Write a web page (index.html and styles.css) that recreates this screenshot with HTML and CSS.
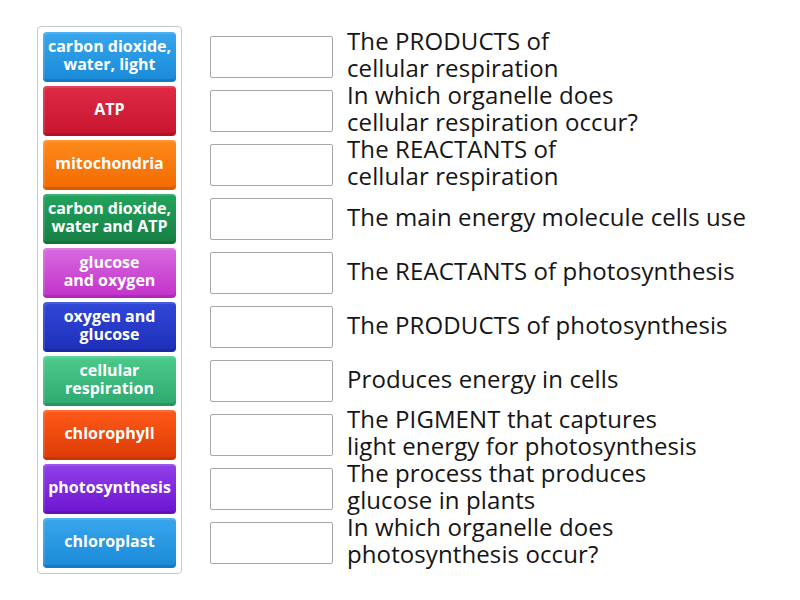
FILE: index.html
```html
<!DOCTYPE html>
<html lang="en">
<head>
  <meta charset="UTF-8" />
  <title>Match up</title>
  <link rel="stylesheet" href="styles.css">
</head>
<body>
  <div class="game">
    <div class="tiles">
      <div class="tile t-blue">carbon dioxide, water, light</div>
      <div class="tile t-red">ATP</div>
      <div class="tile t-orange">mitochondria</div>
      <div class="tile t-green">carbon dioxide, water and ATP</div>
      <div class="tile t-pink">glucose<br>and oxygen</div>
      <div class="tile t-navy">oxygen and glucose</div>
      <div class="tile t-mint">cellular respiration</div>
      <div class="tile t-flame">chlorophyll</div>
      <div class="tile t-purple">photosynthesis</div>
      <div class="tile t-blue">chloroplast</div>
    </div>

    <div class="rows">
      <div class="row"><div class="slot"></div><p>The PRODUCTS of<br>cellular respiration</p></div>
      <div class="row"><div class="slot"></div><p>In which organelle does<br>cellular respiration occur?</p></div>
      <div class="row"><div class="slot"></div><p>The REACTANTS of<br>cellular respiration</p></div>
      <div class="row"><div class="slot"></div><p>The main energy molecule cells use</p></div>
      <div class="row"><div class="slot"></div><p>The REACTANTS of photosynthesis</p></div>
      <div class="row"><div class="slot"></div><p>The PRODUCTS of photosynthesis</p></div>
      <div class="row"><div class="slot"></div><p>Produces energy in cells</p></div>
      <div class="row"><div class="slot"></div><p>The PIGMENT that captures<br>light energy for photosynthesis</p></div>
      <div class="row"><div class="slot"></div><p>The process that produces<br>glucose in plants</p></div>
      <div class="row"><div class="slot"></div><p>In which organelle does<br>photosynthesis occur?</p></div>
    </div>
  </div>
</body>
</html>
```

FILE: styles.css
```css
body {
  margin: 0;
  background: #fff;
  font-family: "Open Sans", "DejaVu Sans", sans-serif;
}

.game {
  display: flex;
  align-items: flex-start;
  padding: 26px 0 0 37px;
}

.tiles {
  display: flex;
  flex-direction: column;
  gap: 4px;
  width: 133px;
  padding: 5px;
  border: 1px solid #c8c8c8;
  border-radius: 4px;
}

.tile {
  height: 50px;
  box-sizing: border-box;
  display: flex;
  align-items: center;
  justify-content: center;
  text-align: center;
  color: #fff;
  font-size: 16px;
  font-weight: 700;
  line-height: 18px;
  border-radius: 4px;
  padding: 0 1px 5px;
  box-shadow: inset 0 -3px 0 rgba(0, 0, 0, 0.12), inset 2px 2px 0 rgba(255, 255, 255, 0.12);
}

.t-blue   { background: linear-gradient(#38a6ec, #1a8ad8); }
.t-red    { background: linear-gradient(#de2a44, #c8152e); }
.t-orange { background: linear-gradient(#ff8a1c, #f26a00); }
.t-green  { background: linear-gradient(#22a45e, #167e44); }
.t-pink   { background: linear-gradient(#d86ae0, #c231c9); }
.t-navy   { background: linear-gradient(#3048d8, #1e2fb8); }
.t-mint   { background: linear-gradient(#4ccb8c, #2ea870); }
.t-flame  { background: linear-gradient(#ff5a1a, #dc3a06); }
.t-purple { background: linear-gradient(#9040e8, #6c14d0); }

.rows {
  display: flex;
  flex-direction: column;
  padding: 4px 0 0 28px;
}

.row {
  display: flex;
  align-items: center;
  height: 54px;
}

.slot {
  width: 123px;
  height: 42px;
  box-sizing: border-box;
  border: 1px solid #a8a8a8;
  border-radius: 2px;
  flex-shrink: 0;
}

.row p {
  margin: 0 0 6px 14px;
  font-size: 24px;
  line-height: 27px;
  color: #151515;
  letter-spacing: 0.1px;
}
```
